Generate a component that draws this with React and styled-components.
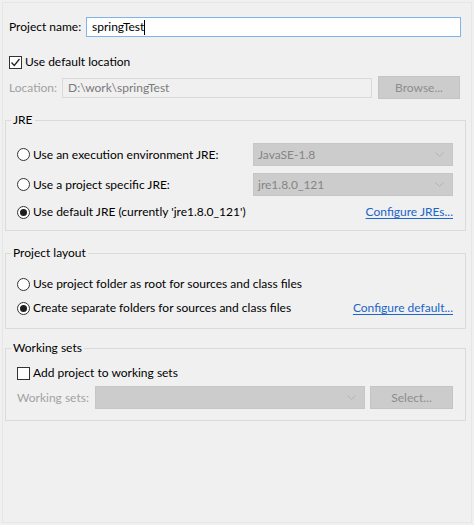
import React from "react";
import styled, { createGlobalStyle } from "styled-components";

const GlobalStyle = createGlobalStyle`
  html, body {
    margin: 0;
    padding: 0;
    background: #f0f0f0;
  }
`;

const Page = styled.div`
  width: 474px;
  height: 525px;
  box-sizing: border-box;
  padding-top: 17px;
  background: #f0f0f0;
  outline: 1px solid #e6e6e6;
  outline-offset: -3px;
  font-family: Lato, "Liberation Sans", sans-serif;
  font-size: 12px;
  line-height: 16px;
  color: #000;
`;

const Row = styled.div`
  display: flex;
  align-items: center;
  height: ${(p) => p.$h || 16}px;
  margin-top: ${(p) => p.$mt || 0}px;
  padding-left: ${(p) => p.$pl ?? 9}px;
`;

const Label = styled.span`
  width: ${(p) => (p.$w ? `${p.$w}px` : "auto")};
  flex: none;
  color: ${(p) => (p.$disabled ? "#a2a2a2" : "#000")};
  white-space: nowrap;
`;

const TextField = styled.div`
  box-sizing: border-box;
  width: ${(p) => p.$w}px;
  height: ${(p) => p.$h}px;
  display: flex;
  align-items: center;
  padding-left: 5px;
  border: 1px solid ${(p) => (p.$focus ? "#7eb4ea" : "#d9d9d9")};
  background: ${(p) => (p.$focus ? "#fff" : "#f0f0f0")};
  color: ${(p) => (p.$focus ? "#000" : "#7a7a7a")};
`;

const Caret = styled.span`
  display: inline-block;
  width: 1px;
  height: 15px;
  background: #000;
`;

const Button = styled.div`
  box-sizing: border-box;
  width: ${(p) => p.$w}px;
  height: 23px;
  margin-left: ${(p) => p.$ml || 0}px;
  display: flex;
  align-items: center;
  justify-content: center;
  background: #cccccc;
  border: 1px solid #c4c4c4;
  color: #8c8c8c;
`;

const Combo = styled.div`
  box-sizing: border-box;
  width: ${(p) => p.$w}px;
  height: 23px;
  margin-left: ${(p) => p.$ml || 0}px;
  display: flex;
  align-items: center;
  justify-content: space-between;
  padding: 0 8px 0 4px;
  background: #cccccc;
  border: 1px solid #c6c6c6;
  color: #858585;
`;

const Chevron = () => (
  <svg width="9" height="5" viewBox="0 0 9 5">
    <path d="M0.5 0.5 L4.5 4.5 L8.5 0.5" fill="none" stroke="#b3b3b3" strokeWidth="1" />
  </svg>
);

const Box = styled.span`
  box-sizing: border-box;
  flex: none;
  width: 13px;
  height: 13px;
  margin-right: 3px;
  border: 1px solid #333;
  background: #fff;
  display: flex;
  align-items: center;
  justify-content: center;
`;

const Check = ({ checked }) => (
  <Box>
    {checked && (
      <svg width="11" height="11" viewBox="0 0 11 11">
        <path d="M1.5 5.5 L4.3 8.5 L9.5 2" fill="none" stroke="#222" strokeWidth="1.3" />
      </svg>
    )}
  </Box>
);

const Circle = styled.span`
  box-sizing: border-box;
  flex: none;
  width: 13px;
  height: 13px;
  margin-right: 3px;
  border-radius: 50%;
  border: 1px solid #333;
  background: #fff;
  display: flex;
  align-items: center;
  justify-content: center;

  &::after {
    content: "";
    display: ${(p) => (p.$on ? "block" : "none")};
    width: 7px;
    height: 7px;
    border-radius: 50%;
    background: #1e1e1e;
  }
`;

const Choice = styled.div`
  display: flex;
  align-items: center;
  white-space: nowrap;
`;

const Radio = ({ on, children }) => (
  <Choice>
    <Circle $on={on} />
    <span>{children}</span>
  </Choice>
);

const Group = styled.fieldset`
  margin: ${(p) => p.$mt}px 8px 0 5px;
  padding: ${(p) => p.$pt}px 12px ${(p) => p.$pb}px 11px;
  border: 1px solid #dadada;
  min-width: 0;
`;

const Legend = styled.legend`
  margin-left: -6px;
  padding: 0 2px;
  line-height: 16px;
`;

const GroupRow = styled.div`
  display: flex;
  align-items: center;
  justify-content: space-between;
  height: ${(p) => p.$h}px;
  margin-top: ${(p) => p.$mt || 0}px;
`;

const Link = styled.span`
  color: #1a66c9;
  text-decoration: underline;
  text-underline-offset: 2px;
`;

export default function App() {
  return (
    <>
      <GlobalStyle />
      <Page>
        <Row $h={20}>
          <Label $w={77}>Project name:</Label>
          <TextField $w={375} $h={20} $focus>
            springTest
            <Caret />
          </TextField>
        </Row>

        <Row $h={16} $mt={17}>
          <Check checked />
          <Label>Use default location</Label>
        </Row>

        <Row $h={23} $mt={6}>
          <Label $w={53} $disabled>
            Location:
          </Label>
          <TextField $w={310} $h={20}>
            D:\work\springTest
          </TextField>
          <Button $w={82} $ml={6}>
            Browse...
          </Button>
        </Row>

        <Group $mt={13} $pt={15} $pb={9}>
          <Legend>JRE</Legend>
          <GroupRow $h={23}>
            <Radio>Use an execution environment JRE:</Radio>
            <Combo $w={200}>
              JavaSE-1.8
              <Chevron />
            </Combo>
          </GroupRow>
          <GroupRow $h={23} $mt={7}>
            <Radio>Use a project specific JRE:</Radio>
            <Combo $w={200}>
              jre1.8.0_121
              <Chevron />
            </Combo>
          </GroupRow>
          <GroupRow $h={18} $mt={7}>
            <Radio on>Use default JRE (currently 'jre1.8.0_121')</Radio>
            <Link>Configure JREs...</Link>
          </GroupRow>
        </Group>

        <Group $mt={14} $pt={14} $pb={11}>
          <Legend>Project layout</Legend>
          <GroupRow $h={18}>
            <Radio>Use project folder as root for sources and class files</Radio>
          </GroupRow>
          <GroupRow $h={18} $mt={6}>
            <Radio on>Create separate folders for sources and class files</Radio>
            <Link>Configure default...</Link>
          </GroupRow>
        </Group>

        <Group $mt={11} $pt={8} $pb={11}>
          <Legend>Working sets</Legend>
          <GroupRow $h={18}>
            <Choice>
              <Check />
              <span>Add project to working sets</span>
            </Choice>
          </GroupRow>
          <GroupRow $h={23} $mt={4}>
            <Label $disabled>Working sets:</Label>
            <Choice>
              <Combo $w={270}>
                <span />
                <Chevron />
              </Combo>
              <Button $w={83} $ml={5}>
                Select...
              </Button>
            </Choice>
          </GroupRow>
        </Group>
      </Page>
    </>
  );
}
